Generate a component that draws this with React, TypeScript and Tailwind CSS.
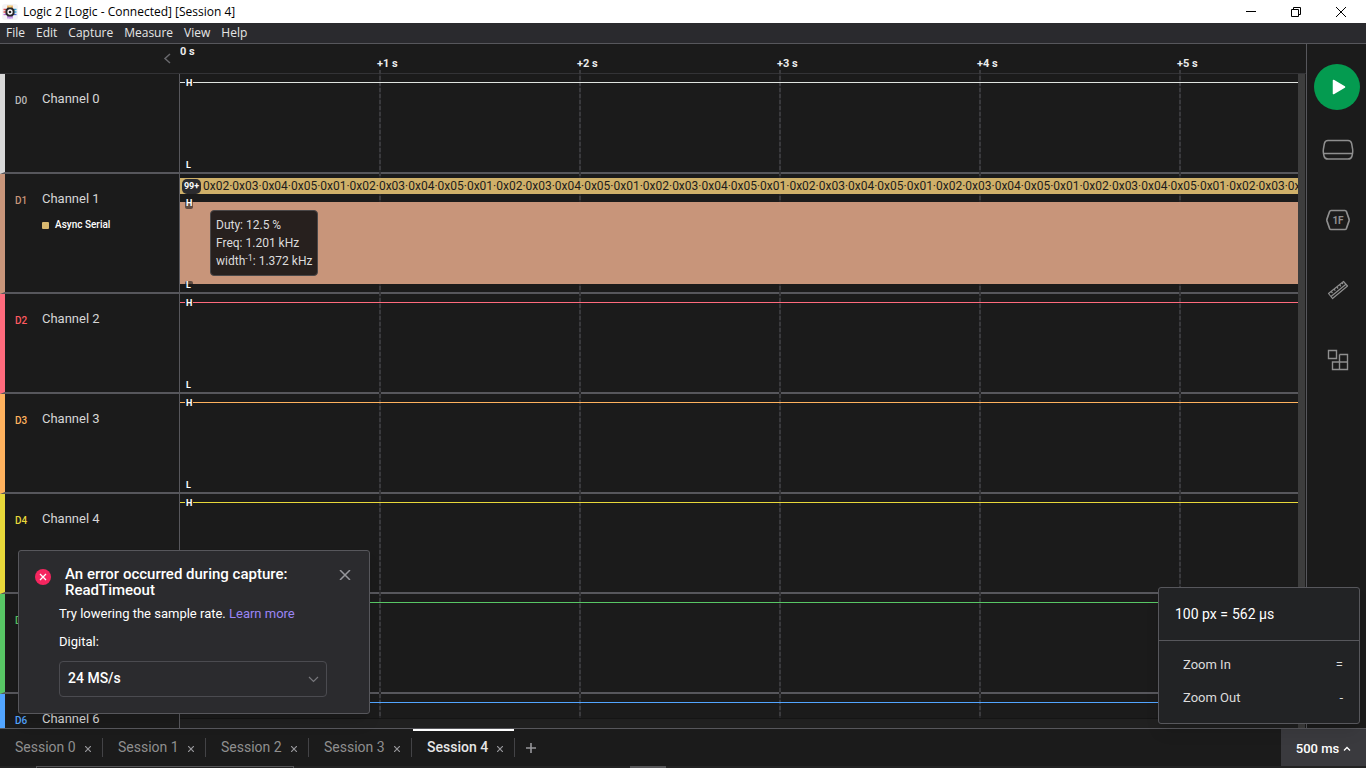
import { ReactNode } from 'react';

const channels = [
  { id: 'D0', name: 'Channel 0', bar: 'border-l-[#d8d8d8]', text: 'text-[#b9b9b9]', line: 'bg-[#e0e4e0]' },
  { id: 'D1', name: 'Channel 1', bar: 'border-l-[#c8957a]', text: 'text-[#c8957a]', line: 'bg-[#c8957a]', serial: true },
  { id: 'D2', name: 'Channel 2', bar: 'border-l-[#ff6b7d]', text: 'text-[#ff5a60]', line: 'bg-[#ff6b7d]' },
  { id: 'D3', name: 'Channel 3', bar: 'border-l-[#ffb25e]', text: 'text-[#ffb25e]', line: 'bg-[#ffb25e]' },
  { id: 'D4', name: 'Channel 4', bar: 'border-l-[#e8d83a]', text: 'text-[#e8d83a]', line: 'bg-[#e8d83a]' },
  { id: 'D5', name: 'Channel 5', bar: 'border-l-[#58c765]', text: 'text-[#58c765]', line: 'bg-[#58c765]' },
  { id: 'D6', name: 'Channel 6', bar: 'border-l-[#52a5ff]', text: 'text-[#52a5ff]', line: 'bg-[#52a5ff]' },
];

const menus = ['File', 'Edit', 'Capture', 'Measure', 'View', 'Help'];
const sessions = ['Session 0', 'Session 1', 'Session 2', 'Session 3', 'Session 4'];
const ticks = ['+1 s', '+2 s', '+3 s', '+4 s', '+5 s'];
const frames = Array.from({ length: 80 }, (_, i) => `0x0${((i + 1) % 5) + 1}`).join('·');

function Logo() {
  return (
    <svg viewBox="0 0 16 16" className="h-4 w-4">
      <rect x="0" y="0" width="16" height="16" rx="3" fill="#f4f4f6" />
      <path d="M6 1.5v3M10 1.5v3" stroke="#f0a13a" strokeWidth="1.4" />
      <path d="M8 1.2v3" stroke="#e8c33a" strokeWidth="1.2" />
      <path d="M1.5 5.5h3M1.5 8h3" stroke="#e4504f" strokeWidth="1.3" />
      <path d="M1.5 10.5h3" stroke="#c06ad8" strokeWidth="1.3" />
      <path d="M11.5 5.5h3M11.5 8h3" stroke="#3aa7d8" strokeWidth="1.3" />
      <path d="M11.5 10.5h3" stroke="#4c6fe0" strokeWidth="1.3" />
      <path d="M6 11.5v3M10 11.5v3M8 11.5v3.3" stroke="#a55be0" strokeWidth="1.2" />
      <path d="M5.8 3.5h4.400L12.500 5.800v4.400L10.200 12.500H5.800L3.500 10.200V5.800z" fill="#26262a" />
      <circle cx="8" cy="8" r="2" fill="none" stroke="#fff" strokeWidth="1.300" />
    </svg>
  );
}

function TitleBar() {
  return (
    <header className="flex h-[23px] shrink-0 items-center bg-white pl-0.5 font-['Open_Sans',sans-serif] text-xs text-black">
      <Logo />
      <h1 className="ml-[5px] flex-1">Logic 2 [Logic - Connected] [Session 4]</h1>
      <div className="flex h-full items-center pr-[3px]">
        <button aria-label="Minimize" className="flex w-[45px] justify-center">
          <svg width="10" height="10"><path d="M0 4.500h10" stroke="#000" /></svg>
        </button>
        <button aria-label="Restore" className="flex w-[45px] justify-center">
          <svg width="10" height="10" fill="none" stroke="#000">
            <path d="M.5 2.500h7v7h-7zM2.500 2.500v-2h7v7h-2" />
          </svg>
        </button>
        <button aria-label="Close" className="flex w-[45px] justify-center">
          <svg width="10" height="10" stroke="#000"><path d="M0 0l10 10M10 0L0 10" /></svg>
        </button>
      </div>
    </header>
  );
}

function Level({ label, y, dark }: { label: string; y: string; dark?: boolean }) {
  return (
    <span className={`absolute left-[5px] flex h-[10px] min-w-2 items-center rounded-[2px] px-px text-[9px] font-bold text-white ${y} ${dark ? 'bg-[#1b1b1b]/60' : 'bg-[#1b1b1b]'}`}>
      {label}
    </span>
  );
}

function Trace({ line }: { line: string }) {
  return (
    <div className="relative mt-2 h-[88px]">
      <div className={`h-px ${line}`} />
      <Level label="H" y="-top-[3px]" />
      <Level label="L" y="top-[79px]" />
    </div>
  );
}

function SerialTrace() {
  return (
    <div className="pt-1">
      <div className="relative flex h-4 items-center gap-0.5 overflow-hidden bg-[#cfb069] pl-0.5 text-xs text-[#1b1b1b]">
        <span className="flex h-[15px] w-[19px] shrink-0 items-center justify-center rounded-[5px] bg-[#2b2b2e] text-[9px] font-bold text-white">99+</span>
        <span className="whitespace-nowrap">{frames}</span>
      </div>
      <div className="relative mt-2 h-[82px] bg-[#c8957a]">
        <Level label="H" y="-top-[3px]" dark />
        <Level label="L" y="top-[79px]" dark />
        <div className="absolute left-[30px] top-2 whitespace-nowrap rounded border border-[#4a4748] bg-[#27201e] px-[5px] py-[5px] text-xs leading-[18px] text-[#dcdcdc]">
          <p>Duty: 12.5 %</p>
          <p>Freq: 1.201 kHz</p>
          <p>width<sup className="text-[9px]">-1</sup>: 1.372 kHz</p>
        </div>
      </div>
    </div>
  );
}

function Toast() {
  return (
    <section role="alert" className="absolute bottom-[14px] left-[18px] h-[164px] w-[352px] rounded-[3px] border border-[#57575c] bg-[#2b2b2e] text-white shadow-lg">
      <div className="flex items-start px-4 pt-[15px]">
        <svg viewBox="0 0 16 16" className="mt-[3px] h-4 w-4">
          <circle cx="8" cy="8" r="8" fill="#f5265f" />
          <path d="M5 5l6 6M11 5l-6 6" stroke="#fff" strokeWidth="1.300" />
        </svg>
        <h2 className="ml-[14px] flex-1 text-[15px] font-medium leading-4">
          An error occurred during capture:<br />ReadTimeout
        </h2>
        <button aria-label="Dismiss" className="mr-0.5 mt-1">
          <svg width="12" height="10" stroke="#97979b" strokeWidth="1.500"><path d="M1 0l10 10M11 0L1 10" /></svg>
        </button>
      </div>
      <div className="px-10 pt-2 text-[13px]">
        <p className="leading-4">
          Try lowering the sample rate. <a href="#" className="text-[#9a85f5]">Learn more</a>
        </p>
        <label htmlFor="rate" className="mt-3 block leading-4">Digital:</label>
        <div className="relative mt-[11px] w-[268px]">
          <select id="rate" className="h-9 w-full appearance-none rounded-sm border border-[#4b4b50] bg-transparent px-2 pb-0.5 text-sm font-medium">
            <option>24 MS/s</option>
          </select>
          <svg width="11" height="7" className="pointer-events-none absolute right-2 top-[15px]" fill="none" stroke="#77777c" strokeWidth="1.200">
            <path d="M1 1l4.500 4.500L10 1" />
          </svg>
        </div>
      </div>
    </section>
  );
}

function ZoomPanel() {
  return (
    <section className="absolute bottom-1 right-[6px] w-[202px] rounded-[3px] border border-[#57575c] bg-[#222325] text-[#dcdcdc] shadow-lg">
      <p className="flex h-[53px] items-center gap-1 border-b border-[#57575c] px-4 text-sm text-white">
        <span>100 px =</span><span>562 µs</span>
      </p>
      <div className="pt-[7px] pb-[9px] text-[13px]">
        <button className="flex h-[33px] w-full items-center justify-between pl-6 pr-4"><span>Zoom In</span><span>=</span></button>
        <button className="flex h-[33px] w-full items-center justify-between pl-6 pr-4"><span>Zoom Out</span><span>-</span></button>
      </div>
    </section>
  );
}

function Tool({ label, children }: { label: string; children: ReactNode }) {
  return (
    <button aria-label={label} className="flex h-[70px] w-full items-center justify-center pl-[3px]">
      {children}
    </button>
  );
}

function Sidebar() {
  return (
    <aside className="flex w-[60px] shrink-0 flex-col items-center border-l border-[#57575c] pt-5">
      <button aria-label="Start capture" className="mb-[5px] ml-px flex h-[46px] w-[46px] items-center justify-center rounded-full bg-[#049b50]">
        <svg width="14" height="16" className="ml-[3px]">
          <path d="M1.500 1.500L12.500 8L1.500 14.500z" fill="#fff" stroke="#fff" strokeWidth="1.500" strokeLinejoin="round" />
        </svg>
      </button>
      <Tool label="Device">
        <svg width="32" height="22" fill="none" stroke="#8f8f8f" strokeWidth="1.500">
          <path d="M6 1.500h20q3 0 3.600 3l1 5.500q.3 2 0 4l-.6 3q-.6 3-4 3H6q-3.400 0-4-3l-.6-3q-.3-2 0-4l1-5.500q.6-3 3.600-3zM1.600 14.500h28.800" />
        </svg>
      </Tool>
      <Tool label="Analyzers">
        <svg width="26" height="22" fill="none" stroke="#8f8f8f" strokeWidth="1.700">
          <path d="M6 1.500h14q1 0 1.400 1L24 10q.3 1 0 2l-2.600 7.500q-.4 1-1.400 1H6q-1 0-1.400-1L2 12q-.3-1 0-2l2.600-7.500q.4-1 1.400-1z" />
          <text x="13" y="15" textAnchor="middle" fill="#8f8f8f" stroke="none" fontSize="10" fontWeight="700">1F</text>
        </svg>
      </Tool>
      <Tool label="Measurements">
        <svg width="22" height="20" fill="none" stroke="#8f8f8f" strokeWidth="1.200" strokeLinejoin="round">
          <path d="M1.500 13.500L16.500 1.500L20.500 6L5.500 18.500zM4 16.500L19 4.300" />
          <path d="M4.200 11.500l1.300 1.500M7 9.200l1.300 1.500M9.800 7l1.300 1.500M12.600 4.800l1.300 1.500M15 2.800l1 1.200" />
        </svg>
      </Tool>
      <Tool label="Extensions">
        <svg width="22" height="22" fill="none" stroke="#8f8f8f" strokeWidth="1.400">
          <path d="M1.500 1.500h8v8h-8zM12.500 5.500h8v15h-15v-7.500h15M12.500 5.500v15" />
        </svg>
      </Tool>
    </aside>
  );
}

export default function App() {
  return (
    <div className="flex h-screen flex-col overflow-hidden bg-[#1b1b1b] font-[Roboto,sans-serif] text-[#d6d6d6]">
      <TitleBar />
      <nav className="flex h-[21px] shrink-0 items-center gap-[11px] border-b border-[#57575c] bg-[#2a2a2e] px-1.5 font-['Open_Sans',sans-serif] text-xs text-[#e6e6e6]">
        {menus.map(m => <button key={m}>{m}</button>)}
      </nav>

      <main className="relative flex min-h-0 flex-1">
        <div className="flex min-w-0 flex-1 flex-col">
          <div className="flex h-[30px] shrink-0 border-b border-[#333336]">
            <div className="flex w-[180px] shrink-0 items-center justify-end pr-[9px]">
              <button aria-label="Collapse channels">
                <svg width="8" height="11" fill="none" stroke="#67676b" strokeWidth="1.500"><path d="M7 1L2 5.500L7 10" /></svg>
              </button>
            </div>
            <div className="flex min-w-0 flex-1 overflow-hidden text-[11px] font-bold leading-4 text-[#ececec]">
              <span className="w-[197px] shrink-0">0 s</span>
              {ticks.map(t => <span key={t} className="w-[200px] shrink-0 pt-3">{t}</span>)}
            </div>
          </div>

          <div className="flex min-h-0 flex-1">
            <div className="w-[180px] shrink-0 overflow-hidden border-r border-[#57575c]">
              {channels.map(c => (
                <div key={c.id} className={`border-b-2 border-l-[5px] border-b-[#57575c] pl-[10px] pt-4 ${c.bar} ${c.serial ? 'h-[120px]' : 'h-[100px]'}`}>
                  <div className="flex items-start">
                    <span className={`w-[27px] text-[10px] font-medium leading-[22px] ${c.text}`}>{c.id}</span>
                    <span className="text-[13px] leading-[18px]">{c.name}</span>
                  </div>
                  {c.serial && (
                    <div className="ml-[27px] mt-[5px] flex items-center gap-[6px] text-[10px] font-medium leading-4 text-white">
                      <span className="h-[7px] w-[7px] rounded-[1px] bg-[#d8b870]" />
                      Async Serial
                    </div>
                  )}
                </div>
              ))}
            </div>
            <div className="relative min-w-0 flex-1">
              <div className="h-full overflow-hidden">
                <div className="absolute -top-1 bottom-[10px] left-0 right-0 flex overflow-hidden">
                  {ticks.map((t, i) => (
                    <div key={t} className={`flex shrink-0 justify-end ${i === 0 ? 'w-[201px]' : 'w-[200px]'}`}>
                      <div className="w-0.5 bg-[repeating-linear-gradient(to_bottom,#3a3a3d_0_4px,#262628_4px_6px)]" />
                    </div>
                  ))}
                </div>
                {channels.map(c => (
                  <div key={c.id} className={`border-b-2 border-[#57575c] ${c.serial ? 'h-[120px]' : 'h-[100px]'} flow-root`}>
                    {c.serial ? <SerialTrace /> : <Trace line={c.line} />}
                  </div>
                ))}
              </div>
              <div className="absolute inset-x-0 bottom-0 h-[10px] border-t border-[#151515] bg-[#202020]" />
            </div>
            <div className="mr-px w-[7px] shrink-0 bg-[#3d3d3d]" />
          </div>
        </div>
        <Sidebar />
        <Toast />
        <ZoomPanel />
      </main>

      <footer className="flex h-10 shrink-0 flex-col border-t border-[#57575c]">
        <div className="flex flex-1 items-stretch">
          {sessions.map((s, i) => (
            <div key={s} className="flex items-center">
              <div className={`flex h-full items-center gap-[9px] border-t-2 pb-1 text-sm ${i === 4 ? 'ml-px w-[101px] border-white pl-[14px] font-medium text-[#e6e6e6]' : 'w-[102px] border-transparent pl-[15px] text-[#8f8f8f]'}`}>
                <button>{s}</button>
                <button aria-label={`Close ${s}`}>
                  <svg width="6" height="6" stroke="#97979b" strokeWidth="1.200" className="mt-1"><path d="M0 0l6 6M6 0L0 6" /></svg>
                </button>
              </div>
              <div className="h-[19px] w-px bg-[#434346]" />
            </div>
          ))}
          <button aria-label="New session" className="ml-[11px]">
            <svg width="10" height="10" stroke="#97979b" strokeWidth="1.600"><path d="M5 0v10M0 5h10" /></svg>
          </button>
          <button className="ml-auto flex w-[85px] items-center justify-center gap-1 bg-[#3a3a3e] pt-0.5 text-[13px] font-medium text-white">
            500 ms
            <svg width="8" height="5" fill="none" stroke="#fff" strokeWidth="1.300"><path d="M1 4.500L4 1.500L7 4.500" /></svg>
          </button>
        </div>
        <div className="flex h-0.5 bg-[#232323]">
          <div className="ml-9 w-[258px] border-x border-t border-[#555557]" />
          <div className="ml-[336px] w-9 bg-[#555557]" />
        </div>
      </footer>
    </div>
  );
}
